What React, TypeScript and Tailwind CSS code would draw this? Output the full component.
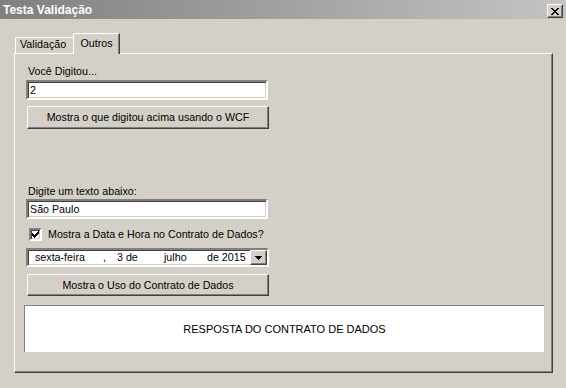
import React from "react";

const sunken =
  "border-2 border-t-[#808080] border-l-[#808080] border-b-white border-r-white shadow-[inset_1px_1px_0_#404040,inset_-1px_-1px_0_#d4d0c8] bg-white";
const raised =
  "border border-t-white border-l-white border-b-[#404040] border-r-[#404040] shadow-[inset_-1px_-1px_0_#808080] bg-[#d4d0c8]";

function Check() {
  return (
    <svg width="7" height="7" viewBox="0 0 7 7" shapeRendering="crispEdges">
      <rect x="6" y="0" width="1" height="1" fill="#000" />
      <rect x="5" y="1" width="2" height="1" fill="#000" />
      <rect x="0" y="2" width="1" height="1" fill="#000" />
      <rect x="4" y="2" width="3" height="1" fill="#000" />
      <rect x="0" y="3" width="2" height="1" fill="#000" />
      <rect x="3" y="3" width="3" height="1" fill="#000" />
      <rect x="0" y="4" width="5" height="1" fill="#000" />
      <rect x="1" y="5" width="3" height="1" fill="#000" />
      <rect x="2" y="6" width="1" height="1" fill="#000" />
    </svg>
  );
}

function Arrow() {
  return (
    <svg width="7" height="4" viewBox="0 0 7 4" shapeRendering="crispEdges">
      <rect x="0" y="0" width="7" height="1" fill="#000" />
      <rect x="1" y="1" width="5" height="1" fill="#000" />
      <rect x="2" y="2" width="3" height="1" fill="#000" />
      <rect x="3" y="3" width="1" height="1" fill="#000" />
    </svg>
  );
}

function CloseX() {
  return (
    <svg width="8" height="7" viewBox="0 0 8 7" shapeRendering="crispEdges">
      <rect x="0" y="0" width="2" height="1" fill="#000" />
      <rect x="6" y="0" width="2" height="1" fill="#000" />
      <rect x="1" y="1" width="2" height="1" fill="#000" />
      <rect x="5" y="1" width="2" height="1" fill="#000" />
      <rect x="2" y="2" width="4" height="1" fill="#000" />
      <rect x="3" y="3" width="2" height="1" fill="#000" />
      <rect x="2" y="4" width="4" height="1" fill="#000" />
      <rect x="1" y="5" width="2" height="1" fill="#000" />
      <rect x="5" y="5" width="2" height="1" fill="#000" />
      <rect x="0" y="6" width="2" height="1" fill="#000" />
      <rect x="6" y="6" width="2" height="1" fill="#000" />
    </svg>
  );
}

export default function App() {
  return (
    <div className="w-[566px] h-[388px] bg-[#d4d0c8] overflow-hidden font-['Liberation_Sans',Arial,sans-serif] text-[10.7px] leading-[13px] text-black flex flex-col">
      {/* Title bar */}
      <div className="h-[19px] flex items-start justify-between bg-linear-to-r from-[#808080] to-[#c4c4c4] pl-[3px] pr-[3px]">
        <span className="mt-[3px] font-bold text-white text-[12px] leading-[14px]">Testa Validação</span>
        <div className={`${raised} mt-[4px] w-[16px] h-[14px] flex items-center justify-center`}>
          <CloseX />
        </div>
      </div>

      {/* Body */}
      <div className="pl-[14px] pt-[14px] flex flex-col">
        {/* Tabs */}
        <div className="flex items-end h-[20px]">
          <div className="ml-[1px] w-[58px] h-[16px] border-t border-l border-white pl-[4px] rounded-tl-[2px]">
            Validação
          </div>
          <div className="relative z-10 -mb-px w-[47px] h-[21px] border-t border-l border-white border-r border-r-[#404040] shadow-[inset_-1px_0_0_#808080] bg-[#d4d0c8] pt-[3px] flex justify-center rounded-tl-[2px]">
            Outros
          </div>
        </div>

        {/* Panel */}
        <div className="w-[539px] h-[320px] border border-t-white border-l-white border-r-[#404040] border-b-[#404040] shadow-[inset_-1px_-1px_0_#808080] flex flex-col pt-[11px]">
          <div className="ml-[13px]">Você Digitou...</div>
          <div className={`${sunken} ml-[11px] mt-[2px] w-[242px] h-[20px] pl-[2px] flex items-center`}>
            2
          </div>
          <div className={`${raised} ml-[12px] mt-[6px] w-[242px] h-[23px] flex items-center justify-center`}>
            Mostra o que digitou acima usando o WCF
          </div>

          <div className="ml-[13px] mt-[56px]">Digite um texto abaixo:</div>
          <div className={`${sunken} ml-[11px] mt-[1px] w-[242px] h-[20px] pl-[2px] flex items-center`}>
            São Paulo
          </div>

          <div className="ml-[14px] mt-[9px] h-[13px] flex items-center">
            <div className={`${sunken} w-[13px] h-[13px] flex items-center justify-center`}>
              <Check />
            </div>
            <span className="ml-[6px]">Mostra a Data e Hora no Contrato de Dados?</span>
          </div>

          <div className={`${sunken} ml-[11px] mt-[7px] w-[243px] h-[19px] flex items-center`}>
            <div className="flex-1 flex items-center pl-[7px]">
              <span className="w-[68px]">sexta-feira</span>
              <span className="w-[14px]">,</span>
              <span className="w-[47px]">3 de</span>
              <span className="w-[43px]">julho</span>
              <span>de 2015</span>
            </div>
            <div className={`${raised} w-[17px] h-[15px] flex items-center justify-center`}>
              <Arrow />
            </div>
          </div>

          <div className={`${raised} ml-[12px] mt-[7px] w-[242px] h-[22px] flex items-center justify-center`}>
            Mostra o Uso do Contrato de Dados
          </div>

          <div className="ml-[9px] mt-[9px] w-[520px] h-[47px] bg-white border-t border-l border-[#808080] flex items-center justify-center text-[11px]">
            RESPOSTA DO CONTRATO DE DADOS
          </div>
        </div>
      </div>
    </div>
  );
}
